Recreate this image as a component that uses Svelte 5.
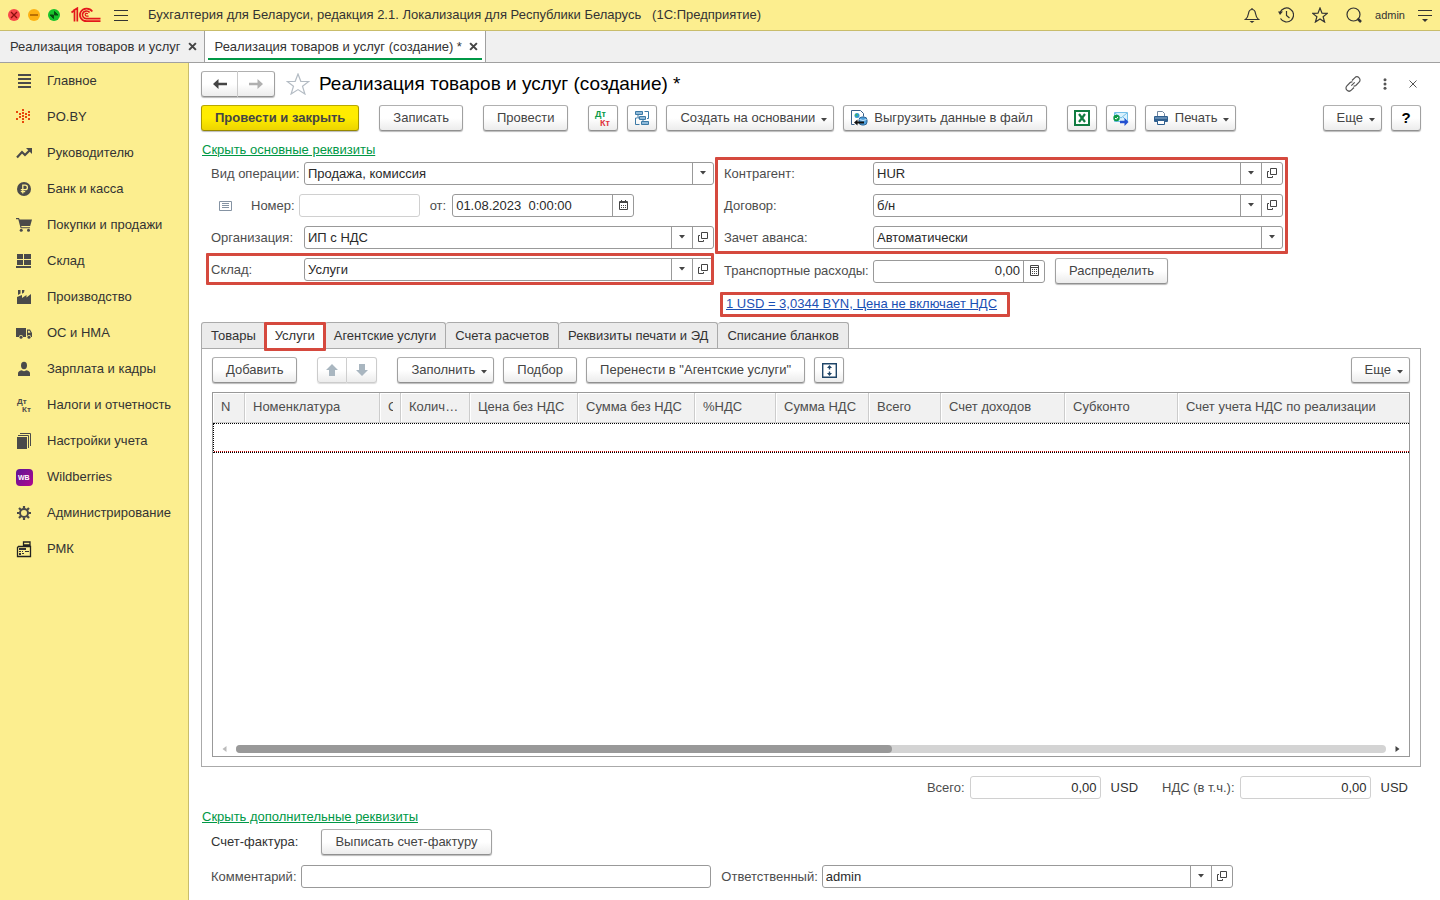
<script>
  const sections = [
    { icon: 'main', title: 'Главное' },
    { icon: 'poby', title: 'PO.BY' },
    { icon: 'chart', title: 'Руководителю' },
    { icon: 'ruble', title: 'Банк и касса' },
    { icon: 'cart', title: 'Покупки и продажи' },
    { icon: 'store', title: 'Склад' },
    { icon: 'factory', title: 'Производство' },
    { icon: 'truck', title: 'ОС и НМА' },
    { icon: 'person', title: 'Зарплата и кадры' },
    { icon: 'dtkt', title: 'Налоги и отчетность' },
    { icon: 'books', title: 'Настройки учета' },
    { icon: 'wb', title: 'Wildberries' },
    { icon: 'gear', title: 'Администрирование' },
    { icon: 'cash', title: 'РМК' }
  ]

  const pages = ['Товары', 'Услуги', 'Агентские услуги', 'Счета расчетов', 'Реквизиты печати и ЭД', 'Списание бланков']

  const columns = [
    { title: 'N', width: 32 },
    { title: 'Номенклатура', width: 135 },
    { title: 'С', width: 21, clip: true },
    { title: 'Колич…', width: 69 },
    { title: 'Цена без НДС', width: 108 },
    { title: 'Сумма без НДС', width: 117 },
    { title: '%НДС', width: 81 },
    { title: 'Сумма НДС', width: 93 },
    { title: 'Всего', width: 72 },
    { title: 'Счет доходов', width: 124 },
    { title: 'Субконто', width: 113 },
    { title: 'Счет учета НДС по реализации' }
  ]

  const poDots = [
    [6, 0], [6, 3], [6, 6], [6, 9], [6, 12],
    [3, 4], [3, 7], [9, 4], [9, 7],
    [0, 2], [0, 9], [12, 2], [12, 5], [12, 9]
  ]

  let activePage = $state('Услуги')
  let operation = $state('Продажа, комиссия')
  let number = $state('')
  let date = $state('01.08.2023  0:00:00')
  let organization = $state('ИП с НДС')
  let warehouse = $state('Услуги')
  let contractor = $state('HUR')
  let contract = $state('б/н')
  let advance = $state('Автоматически')
  let transport = $state('0,00')
  let comment = $state('')
  let responsible = $state('admin')
</script>

{#snippet caret()}
  <svg class="caret" width="6" height="4" viewBox="0 0 6 4"><path d="M0 0h6L3 3.5z" fill="#444" /></svg>
{/snippet}

{#snippet drop(label)}
  <button class="pick" aria-label={label}>{@render caret()}</button>
{/snippet}

{#snippet open(label)}
  <button class="pick" aria-label={label}>
    <svg width="10" height="10" viewBox="0 0 10 10" fill="none" stroke="#444">
      <path d="M3.5 .5h6v6h-6zM2 3.500h-1.500v6h5v-1.500" />
    </svg>
  </button>
{/snippet}

{#snippet cross(size)}
  <svg width={size} height={size} viewBox="0 0 8 8"><path d="M1 1l6 6M7 1L1 7" stroke="#444" stroke-width="1.800" /></svg>
{/snippet}

{#snippet sectionIcon(name)}
  <svg width="17" height="17" viewBox="0 0 17 17" fill="#4a4a4a">
    {#if name === 'main'}
      <path d="M2 1h13v2H2zM2 5h13v2H2zM2 9h13v2H2zM2 13h13v2H2z" />
    {:else if name === 'poby'}
      {#each poDots as [x, y]}
        <rect {x} {y} width="2" height="2" fill="#e8480c" />
      {/each}
    {:else if name === 'chart'}
      <path d="M1 12.500L6 7l3 3 4.500-4.500" fill="none" stroke="#4a4a4a" stroke-width="2.200" />
      <path d="M10 3h6v6z" />
    {:else if name === 'ruble'}
      <circle cx="8" cy="8" r="7" />
      <path d="M6.800 12.500V4.200h2.400a2.200 2.200 0 0 1 0 4.400H4.800M4.800 10.600h4.400" fill="none" stroke="#fcee8f" stroke-width="1.300" />
    {:else if name === 'cart'}
      <path d="M0 1h3l.6 1.500H16L14.200 9H5.200l.3 1.200H14v1H4.600L2.300 2.300H0z" />
      <circle cx="5.200" cy="13.300" r="1.500" /><circle cx="12.500" cy="13.300" r="1.500" />
    {:else if name === 'store'}
      <path d="M1 1h6v5H1zM8 1h7v5H8zM1 7h6v5H1zM8 7h7v5H8zM0 13h15v2H0z" />
    {:else if name === 'factory'}
      <path d="M1 15V8l5-2v3l4.500-3v2.500L15 5v10z" />
      <path d="M2 1h2.500v3.500L2 6zM6 1h2.500L8 3.500 6 4.800z" />
    {:else if name === 'truck'}
      <path d="M0 3h10v9H7a2 2 0 0 0-4 0H0zM11 4.500h3L16 8v4h-1a2 2 0 0 0-4 0z" />
      <path d="M12 5.800h1.500l1 2H12z" fill="#fcee8f" />
      <circle cx="5" cy="12.300" r="1.500" /><circle cx="13" cy="12.300" r="1.500" />
    {:else if name === 'person'}
      <ellipse cx="8" cy="4.500" rx="3" ry="3.700" />
      <path d="M2 15v-2.500Q2 10 5.500 9.300L8 10.200l2.500-.9Q14 10 14 12.500V15z" />
    {:else if name === 'dtkt'}
      <text x="1" y="7" font-size="8" font-weight="700">Дт</text>
      <text x="6" y="15" font-size="8" font-weight="700">Кт</text>
    {:else if name === 'books'}
      <path d="M1 4h10v12H1z" />
      <path d="M2 2.500h10.500V15M4 .5h10.500V13" fill="none" stroke="#4a4a4a" />
    {:else if name === 'wb'}
      <defs>
        <linearGradient id="wbFill" x1="0" y1="0" x2="1" y2="1">
          <stop offset="0" stop-color="#5b1496" /><stop offset="1" stop-color="#b0088f" />
        </linearGradient>
      </defs>
      <rect width="17" height="17" rx="4" fill="url(#wbFill)" />
      <text x="2" y="11" font-size="7" font-weight="700" fill="#fff">WB</text>
    {:else if name === 'gear'}
      <circle cx="8" cy="8" r="4" fill="none" stroke="#4a4a4a" stroke-width="2" />
      <path d="M8 1v2.500M8 12.500V15M1 8h2.500M12.500 8H15M3 3l2 2M11 11l2 2M13 3l-2 2M5 11l-2 2" stroke="#4a4a4a" stroke-width="2.200" />
    {:else if name === 'cash'}
      <path d="M2.500 5.500h12v10h-13v-9zM7.500 1h6.500v3H7.500zM11 4v2" fill="none" stroke="#222" stroke-width="1.300" />
      <path d="M3 7h7v2H3zM3 10h2v1H3zM6 10h1v1H6zM3 12h2v2H3zM6 12h2v1H6zM9 10h4v1H9z" fill="#333" />
    {/if}
  </svg>
{/snippet}

<div class="app">
  <header class="titlebar">
    <div class="window-buttons">
      <button class="dot red" aria-label="Закрыть окно">
        <svg width="12" height="12" viewBox="0 0 12 12"><path d="M3 3l6 6M9 3L3 9" stroke="#8b0f0f" stroke-width="1.300" /></svg>
      </button>
      <button class="dot amber" aria-label="Свернуть">
        <svg width="12" height="12" viewBox="0 0 12 12"><path d="M2 6h8" stroke="#a35c00" stroke-width="1.500" /></svg>
      </button>
      <button class="dot green" aria-label="Развернуть">
        <svg width="12" height="12" viewBox="0 0 12 12"><path d="M6.500 2.500V6H10zM5.500 9.500V6H2z" fill="#064d10" stroke="#064d10" /></svg>
      </button>
    </div>
    <svg class="logo" width="30" height="16" viewBox="0 0 30 16" fill="none" stroke="#e3171b" stroke-width="1.700">
      <path d="M.5 5.500L3.500 3.300V14.500M2.500 3.500L6.300 1.200V14.500" />
      <path d="M21.300 4.500A6.700 6.300 0 1 0 15.800 14.200H29.500" />
      <path d="M18.600 5.500A4 3.800 0 1 0 15.800 11.600H29.500" />
      <path d="M16.800 7a1.400 1.400 0 1 0-1.200 2.100h2" stroke-width="1.200" />
    </svg>
    <button class="flat" aria-label="Главное меню">
      <svg width="14" height="12" viewBox="0 0 14 12"><path d="M0 1.500h14M0 6.500h14M0 11.500h14" stroke="#333" /></svg>
    </button>
    <span class="app-name">Бухгалтерия для Беларуси, редакция 2.1. Локализация для Республики Беларусь &nbsp; (1С:Предприятие)</span>
    <div class="tools">
      <button class="flat" aria-label="Уведомления">
        <svg width="16" height="16" viewBox="0 0 16 16" fill="none" stroke="#333" stroke-width="1.200">
          <path d="M1.500 12.500h13c-2-1.500-2.500-3-3-6C11.100 3.500 10 2.500 8 2.500S4.900 3.500 4.500 6.500c-.5 3-1 4.500-3 6zM8 1v1.500" /><path d="M5.500 14h5L8 16z" fill="#333" stroke="none" />
        </svg>
      </button>
      <button class="flat" aria-label="История">
        <svg width="16" height="16" viewBox="0 0 16 16" fill="none" stroke="#333" stroke-width="1.200">
          <path d="M2 5.500a7 7 0 1 1 .5 6M8.500 4v4.500l3 2.500" /><path d="M0 4.500h5L2 8z" fill="#333" stroke="none" />
        </svg>
      </button>
      <button class="flat" aria-label="Избранное">
        <svg width="16" height="16" viewBox="0 0 16 16" fill="none" stroke="#333" stroke-width="1.200"><path d="M8 1l2 5.200 5.300.2-4.200 3.300 1.500 5.300L8 12l-4.600 3 1.500-5.300L.7 6.400 6 6.200z" /></svg>
      </button>
      <button class="flat" aria-label="Поиск">
        <svg width="16" height="16" viewBox="0 0 16 16" fill="none" stroke="#333"><circle cx="7.500" cy="7.500" r="6.500" stroke-width="1.200" /><path d="M11.500 11.500l3.500 3.500" stroke-width="2.500" /></svg>
      </button>
      <a class="user" href="#user">admin</a>
      <button class="flat" aria-label="Настройка">
        <svg width="14" height="14" viewBox="0 0 14 14"><path d="M0 2.500h14M0 7.500h14" stroke="#333" /><path d="M4 11h6l-3 3z" fill="#333" /></svg>
      </button>
    </div>
  </header>

  <nav class="windows">
    <div class="window-tab">
      <a href="#list">Реализация товаров и услуг</a>
      <button class="flat" aria-label="Закрыть вкладку">{@render cross(9)}</button>
    </div>
    <div class="window-tab active">
      <a href="#doc">Реализация товаров и услуг (создание) *</a>
      <button class="flat" aria-label="Закрыть вкладку">{@render cross(9)}</button>
    </div>
  </nav>

  <div class="body">
    <aside class="sections">
      {#each sections as section (section.icon)}
        <a href="#{section.icon}">
          {@render sectionIcon(section.icon)}
          <span>{section.title}</span>
        </a>
      {/each}
    </aside>

    <main>
      <div class="heading">
        <div class="pair">
          <button class="btn" aria-label="Назад">
            <svg width="14" height="10" viewBox="0 0 14 10"><path d="M5.500 0v3.700H14v2.600H5.500V10L0 5z" fill="#444" /></svg>
          </button>
          <button class="btn" aria-label="Вперед">
            <svg width="14" height="10" viewBox="0 0 14 10"><path d="M8.500 0v3.800H0v2.400h8.500V10L14 5z" fill="#b0b0b0" /></svg>
          </button>
        </div>
        <button class="flat" aria-label="В избранное">
          <svg width="24" height="22" viewBox="0 0 24 22" fill="none" stroke="#b4bcc4" stroke-width="1.200"><path d="M12 1l2.800 7.300 8 .2-6.300 4.800L18.900 21 12 16.600 5.100 21l2.400-7.700L1.200 8.500l8-.2z" /></svg>
        </button>
        <h1>Реализация товаров и услуг (создание) *</h1>
        <div class="form-tools">
          <button class="flat" aria-label="Получить ссылку">
            <svg width="16" height="16" viewBox="0 0 16 16" fill="none" stroke="#555" stroke-width="1.200">
              <path d="M7 4.500L9.700 1.800a2.800 2.800 0 0 1 4.400 4.400L10.800 9.500a2.800 2.800 0 0 1-2.300.5M9 11.500L6.300 14.200a2.800 2.800 0 0 1-4.400-4.400L5.200 6.500a2.800 2.800 0 0 1 2.300-.5M6.300 9.700l3.400-3.400" />
            </svg>
          </button>
          <button class="flat" aria-label="Дополнительно">
            <svg width="4" height="12" viewBox="0 0 4 12" fill="#555"><circle cx="2" cy="1.800" r="1.500" /><circle cx="2" cy="6" r="1.500" /><circle cx="2" cy="10.200" r="1.500" /></svg>
          </button>
          <button class="flat" aria-label="Закрыть">
            <svg width="8" height="8" viewBox="0 0 8 8"><path d="M.5 .5l7 7M7.500 .5l-7 7" stroke="#555" /></svg>
          </button>
        </div>
      </div>

      <div class="commands">
        <button class="btn primary">Провести и закрыть</button>
        <button class="btn apart">Записать</button>
        <button class="btn apart">Провести</button>
        <button class="btn square apart" aria-label="Показать проводки">
          <svg width="18" height="18" viewBox="0 0 18 18"><text x="1" y="8" font-size="9" font-weight="700" fill="#0a9a48">Дт</text><text x="6" y="17" font-size="9" font-weight="700" fill="#e0323c">Кт</text></svg>
        </button>
        <button class="btn square" aria-label="Структура подчиненности">
          <svg width="16" height="16" viewBox="0 0 16 16" fill="#8fb9d8" stroke="#3c7aa6">
            <path d="M1.500 1.500h7v3h-7zM5.500 6.500h6v3h-6zM7.500 11.500h7v3h-7z" /><path d="M10.500 1.500h4v7h-1.500M5.500 14.500h-4V8h2M4 5v3h1.500M9 10v1.500" fill="none" />
          </svg>
        </button>
        <button class="btn menu">Создать на основании{@render caret()}</button>
        <button class="btn export">
          <svg width="18" height="18" viewBox="0 0 18 18">
            <path d="M1.500 1.500h9l3 3v3M1.500 1.500v14h3" fill="#fff" stroke="#39608a" /><circle cx="7" cy="6.500" r="2.500" fill="#2f9bd0" /><circle cx="6.300" cy="6" r="1" fill="#45b649" />
            <rect x="9" y="8" width="8" height="8" rx="3" fill="#4fa0dc" stroke="#2b6496" /><path d="M9.500 10.500q3.500 2 7 0" fill="none" stroke="#cfe6f7" /><path d="M4 13.500L7.500 10.500v2H14v2H7.500v2z" fill="#111" />
          </svg>
          Выгрузить данные в файл
        </button>
        <button class="btn square apart" aria-label="Excel">
          <svg width="16" height="16" viewBox="0 0 16 16"><rect x="1" y="1" width="14" height="14" fill="#fff" stroke="#107c41" stroke-width="2" /><path d="M5 4l6 8M11 4l-6 8" stroke="#107c41" stroke-width="2.200" /></svg>
        </button>
        <button class="btn square" aria-label="Отправить">
          <svg width="16" height="16" viewBox="0 0 16 16"><path d="M1.500 2.500h13v9h-13z" fill="#d9f1fd" stroke="#74bfe8" /><path d="M2 3l6 5 6-5M2 11l4-4M14 11l-4-4" fill="none" stroke="#74bfe8" /><circle cx="3.500" cy="8" r="3.200" fill="#0d9a45" /><path d="M2 8l1.200 1.200L5 7" fill="none" stroke="#fff" /><path d="M7 10.800h4.500V8l4 4-4 4v-2.800H7z" fill="#2450d0" /></svg>
        </button>
        <button class="btn menu print">
          <svg width="16" height="16" viewBox="0 0 16 16"><path d="M4.500 6V1.500h5l2 2V6" fill="#fff" stroke="#6f86a0" /><rect x="1" y="6" width="14" height="6" rx="1" fill="#2f5f8f" /><path d="M2 8h12" stroke="#93b4d3" /><path d="M4.500 10.500h7v4h-7z" fill="#fff" stroke="#2f5f8f" /></svg>
          Печать{@render caret()}
        </button>
        <button class="btn menu push">Еще{@render caret()}</button>
        <button class="btn square help">?</button>
      </div>

      <a class="toggle" href="#main-fields">Скрыть основные реквизиты</a>

      <div class="fields">
        <div class="column left">
          <div class="row">
            <label for="operation">Вид операции:</label>
            <div class="field">
              <select id="operation" bind:value={operation}>
                <option>Продажа, комиссия</option>
              </select>
              <span class="pick">{@render caret()}</span>
            </div>
          </div>
          <div class="row number-row">
            <svg width="13" height="10" viewBox="0 0 13 10" fill="none" stroke="#8593a3"><path d="M.5 .5h12v9H.5zM3 2.500h7M3 4.500h7M3 6.500h7" /></svg>
            <label for="number">Номер:</label>
            <div class="field pale number"><input id="number" bind:value={number} /></div>
            <label for="date">от:</label>
            <div class="field date">
              <input id="date" bind:value={date} />
              <button class="pick" aria-label="Календарь">
                <svg width="9" height="10" viewBox="0 0 9 10" fill="none" stroke="#444"><path d="M.5 1.500h8v8H.5zM0 2.500h9M2.500 0v3M6.500 0v3" /><path d="M2 5.500h5M2 7.500h5" stroke-dasharray="1 1" /></svg>
              </button>
            </div>
          </div>
          <div class="row">
            <label for="organization">Организация:</label>
            <div class="field">
              <input id="organization" bind:value={organization} />
              {@render drop('Выбрать организацию')}{@render open('Открыть организацию')}
            </div>
          </div>
          <div class="row marked mark-store">
            <label for="warehouse">Склад:</label>
            <div class="field">
              <input id="warehouse" bind:value={warehouse} />
              {@render drop('Выбрать склад')}{@render open('Открыть склад')}
            </div>
          </div>
        </div>

        <div class="column right">
          <div class="column marked mark-contract">
            <div class="row">
              <label for="contractor">Контрагент:</label>
              <div class="field">
                <input id="contractor" bind:value={contractor} />
                {@render drop('Выбрать контрагента')}{@render open('Открыть контрагента')}
              </div>
            </div>
            <div class="row">
              <label for="contract">Договор:</label>
              <div class="field">
                <input id="contract" bind:value={contract} />
                {@render drop('Выбрать договор')}{@render open('Открыть договор')}
              </div>
            </div>
            <div class="row">
              <label for="advance">Зачет аванса:</label>
              <div class="field">
                <select id="advance" bind:value={advance}>
                  <option>Автоматически</option>
                </select>
                <span class="pick">{@render caret()}</span>
              </div>
            </div>
          </div>
          <div class="row">
            <label for="transport">Транспортные расходы:</label>
            <div class="field transport">
              <input id="transport" class="num" bind:value={transport} />
              <button class="pick" aria-label="Калькулятор">
                <svg width="9" height="11" viewBox="0 0 9 11" fill="none" stroke="#444"><path d="M.5 .5h8v10h-8zM1 2.500h7" /><path d="M2 4.500h5M2 6.500h5M2 8.500h5" stroke-dasharray="1 1" /></svg>
              </button>
            </div>
            <button class="btn">Распределить</button>
          </div>
          <a class="rate marked mark-rate" href="#rate">1 USD = 3,0344 BYN, Цена не включает НДС</a>
        </div>
      </div>

      <div class="pages" role="tablist">
        {#each pages as page (page)}
          <button
            role="tab"
            class:active={page === activePage}
            class:marked={page === 'Услуги'}
            class:mark-page={page === 'Услуги'}
            aria-selected={page === activePage}
            onclick={() => (activePage = page)}
          >
            {page}
          </button>
        {/each}
      </div>

      <section class="panel">
        <div class="commands">
          <button class="btn">Добавить</button>
          <div class="pair muted apart">
            <button class="btn" aria-label="Переместить вверх">
              <svg width="12" height="12" viewBox="0 0 12 12"><path d="M6 0l6 6H9v6H3V6H0z" fill="#a9b6c0" /></svg>
            </button>
            <button class="btn" aria-label="Переместить вниз">
              <svg width="12" height="12" viewBox="0 0 12 12"><path d="M6 12l6-6H9V0H3v6H0z" fill="#a9b6c0" /></svg>
            </button>
          </div>
          <button class="btn menu apart">Заполнить{@render caret()}</button>
          <button class="btn">Подбор</button>
          <button class="btn">Перенести в "Агентские услуги"</button>
          <button class="btn square" aria-label="Изменить высоту">
            <svg width="15" height="15" viewBox="0 0 15 15"><path d="M.7 .7h13.600v13.600H.7z" fill="#fff" stroke="#1f4568" stroke-width="1.400" /><path d="M7.500 4v2.500M7.500 8.500V11" stroke="#1f4568" stroke-width="1.400" /><path d="M7.500 2l2.500 3H5zM7.500 13l2.500-3H5z" fill="#1f4568" /></svg>
          </button>
          <button class="btn menu push">Еще{@render caret()}</button>
        </div>

        <div class="grid">
          <table>
            <colgroup>
              {#each columns as column (column.title)}
                <col style:width={column.width ? `${column.width}px` : null} />
              {/each}
            </colgroup>
            <thead>
              <tr>
                {#each columns as column (column.title)}
                  <th class:clip={column.clip}>{column.title}</th>
                {/each}
              </tr>
            </thead>
            <tbody>
              <tr><td colspan={columns.length}><div class="cursor"></div></td></tr>
            </tbody>
          </table>
          <div class="scroll">
            <svg width="5" height="6" viewBox="0 0 5 6"><path d="M4.500 0v6L.5 3z" fill="#bbb" /></svg>
            <div class="track"><div class="thumb"></div></div>
            <svg width="5" height="6" viewBox="0 0 5 6"><path d="M.5 0v6l4-3z" fill="#444" /></svg>
          </div>
        </div>
      </section>

      <div class="totals">
        <label for="total">Всего:</label>
        <div class="field pale"><input id="total" class="num" value="0,00" readonly /></div>
        <span>USD</span>
        <label class="vat" for="vat">НДС (в т.ч.):</label>
        <div class="field pale"><input id="vat" class="num" value="0,00" readonly /></div>
        <span>USD</span>
      </div>

      <a class="toggle" href="#extra-fields">Скрыть дополнительные реквизиты</a>

      <div class="invoice">
        <span>Счет-фактура:</span>
        <button class="btn">Выписать счет-фактуру</button>
      </div>

      <div class="footer">
        <label for="comment">Комментарий:</label>
        <div class="field"><input id="comment" bind:value={comment} /></div>
        <label class="second" for="responsible">Ответственный:</label>
        <div class="field">
          <input id="responsible" bind:value={responsible} />
          {@render drop('Выбрать ответственного')}{@render open('Открыть ответственного')}
        </div>
      </div>
    </main>
  </div>
</div>

<style>
  :global(body) {
    font-family: "Liberation Sans", Arial, sans-serif;
    font-size: 13px;
    line-height: 16px;
    color: #333;
    background: #fff;
  }

  .app {
    min-height: 100vh;
    display: flex;
    flex-direction: column;
  }

  .app * {
    box-sizing: border-box;
  }

  svg {
    display: block;
    flex: none;
  }

  button,
  input,
  select {
    font: inherit;
    color: inherit;
  }

  a {
    color: inherit;
    text-decoration: none;
  }

  .flat {
    display: flex;
    padding: 0;
    border: none;
    background: none;
  }

  .titlebar {
    display: flex;
    align-items: center;
    height: 31px;
    padding: 0 8px;
    background: #fcee8f;
    border-bottom: 1px solid #c9bd6b;
  }

  .window-buttons {
    display: flex;
    gap: 8px;
  }

  .dot {
    width: 12px;
    height: 12px;
    padding: 0;
    border: none;
    border-radius: 50%;
  }

  .dot.red {
    background: #f8484a;
  }

  .dot.amber {
    background: #fdb113;
  }

  .dot.green {
    background: #16c22c;
  }

  .logo {
    margin: 0 13px 0 11px;
  }

  .app-name {
    margin-left: 20px;
    white-space: nowrap;
  }

  .tools {
    display: flex;
    align-items: center;
    gap: 18px;
    margin-left: auto;
  }

  .user {
    margin: 0 -5px;
    font-size: 11px;
  }

  .windows {
    display: flex;
    height: 32px;
    background: #f0f0f0;
    border-bottom: 1px solid #a0a0a0;
  }

  .window-tab {
    display: flex;
    align-items: center;
    gap: 7px;
    padding: 0 7px 0 10px;
    border-right: 1px solid #a0a0a0;
  }

  .window-tab.active {
    position: relative;
    background: #fff;
  }

  .window-tab.active::after {
    content: '';
    position: absolute;
    left: 3px;
    right: 3px;
    bottom: 2px;
    height: 2px;
    background: #009846;
  }

  .body {
    flex: 1;
    display: flex;
  }

  .sections {
    flex: none;
    width: 189px;
    background: #fcee8f;
    border-right: 1px solid #c9bd6b;
  }

  .sections a {
    display: flex;
    align-items: center;
    gap: 14px;
    height: 36px;
    padding-left: 16px;
  }

  main {
    flex: 1;
    min-width: 0;
    display: flex;
    flex-direction: column;
    padding: 8px 19px 12px 12px;
  }

  .heading {
    display: flex;
    align-items: center;
    height: 26px;
    margin-bottom: 8px;
  }

  h1 {
    margin: 0 0 0 9px;
    font-size: 19px;
    line-height: 24px;
    font-weight: 400;
    color: #000;
  }

  .form-tools {
    display: flex;
    align-items: center;
    gap: 22px;
    margin-left: auto;
    padding-right: 4px;
  }

  .btn {
    display: flex;
    align-items: center;
    justify-content: center;
    height: 26px;
    padding: 0 13px;
    border: 1px solid #a0a0a0;
    border-color: #b0b0b0 #a0a0a0 #909090;
    border-radius: 3px;
    background: linear-gradient(#fff 50%, #ececec);
    box-shadow: 0 1px 1px #bbb;
    color: #444;
    white-space: nowrap;
  }

  .btn.primary {
    font-weight: 700;
    background: linear-gradient(#ffec00 50%, #ecd400);
    border-color: #b8a800 #a89800 #968800;
  }

  .btn.square {
    width: 30px;
    padding: 0;
  }

  .btn.help {
    color: #000;
    font-size: 15px;
    font-weight: 700;
  }

  .btn.menu {
    gap: 6px;
    padding-right: 6px;
  }

  .btn.menu .caret {
    margin-top: 4px;
  }

  .btn.export {
    gap: 6px;
    padding-left: 6px;
  }

  .btn.print {
    padding-left: 7px;
  }

  .pair {
    display: flex;
    margin-right: 11px;
  }

  .pair .btn {
    width: 37px;
    padding: 0;
  }

  .pair .btn:first-child {
    border-right-color: #ccc;
    border-radius: 3px 0 0 3px;
  }

  .pair .btn:last-child {
    border-left: none;
    border-radius: 0 3px 3px 0;
  }

  .pair.muted {
    margin-right: 0;
  }

  .pair.muted .btn {
    width: 30px;
    border-color: #ccc;
    box-shadow: 0 1px 1px #ddd;
  }

  .commands {
    display: flex;
    gap: 9px;
  }

  .apart {
    margin-left: 11px;
  }

  .push {
    margin-left: auto;
  }

  .toggle {
    align-self: flex-start;
    margin: 11px 0 4px 1px;
    color: #009846;
    text-decoration: underline;
  }

  .fields {
    display: grid;
    grid-template-columns: 503fr 559fr 128fr;
    gap: 10px;
    padding-left: 10px;
  }

  .column {
    display: flex;
    flex-direction: column;
    gap: 9px;
  }

  .row {
    display: flex;
    align-items: center;
  }

  label {
    flex: none;
    color: #4d4d4d;
    white-space: nowrap;
  }

  .left .row > label {
    width: 93px;
  }

  .right .row > label {
    width: 149px;
  }

  .field {
    flex: 1;
    display: flex;
    min-width: 0;
    height: 23px;
    border: 1px solid #999;
    border-radius: 3px;
    background: #fff;
  }

  .field.pale {
    border-color: #d0d0d0;
  }

  .field input,
  .field select {
    flex: 1;
    min-width: 0;
    padding: 0 3px;
    border: none;
    outline: none;
    background: none;
    appearance: none;
    color: #2a2a2a;
    white-space: pre;
  }

  .field input.num {
    text-align: right;
  }

  .pick {
    flex: none;
    display: flex;
    align-items: center;
    justify-content: center;
    width: 21px;
    padding: 0 0 2px;
    border: none;
    border-left: 1px solid #999;
    background: none;
  }

  .left .number-row {
    padding-left: 8px;
  }

  .left .number-row > label {
    width: auto;
    margin: 0 4px 0 19px;
  }

  .left .number-row .number + label {
    margin: 0 6px 0 10px;
  }

  .field.number {
    flex: 0 1 121px;
  }

  .field.date {
    flex: 0 1 182px;
  }

  .field.transport {
    flex: 0 1 172px;
    margin-right: 10px;
  }

  .rate {
    align-self: flex-start;
    margin: 3px 0 0 2px;
    color: #1a4fb4;
    text-decoration: underline;
  }

  .marked {
    position: relative;
  }

  .marked::after {
    content: '';
    position: absolute;
    border: 3px solid #d5493e;
    border-radius: 1px;
    pointer-events: none;
  }

  .mark-store::after {
    inset: -5px 0 -4px -5px;
  }

  .mark-contract::after {
    inset: -5px -5px -5px -9px;
  }

  .mark-rate::after {
    inset: -4px -13px -5px -6px;
  }

  .mark-page::after {
    inset: -1px -2px -3px -2px;
  }

  .pages {
    display: flex;
    margin-top: 10px;
  }

  .pages button {
    height: 26px;
    padding: 0 9px;
    border: 1px solid #aaa;
    border-width: 1px 1px 0 0;
    border-radius: 3px 3px 0 0;
    background: #ebebeb;
    white-space: nowrap;
  }

  .pages button:first-child {
    border-left-width: 1px;
  }

  .pages button.active {
    z-index: 1;
    background: #fff;
  }

  .panel {
    flex: 1;
    display: flex;
    flex-direction: column;
    gap: 9px;
    padding: 8px 10px 9px;
    border: 1px solid #aaa;
  }

  .grid {
    flex: 1;
    display: flex;
    flex-direction: column;
    min-height: 200px;
    border: 1px solid #999;
  }

  table {
    width: 100%;
    table-layout: fixed;
    border-spacing: 0;
  }

  th {
    height: 30px;
    padding: 0 8px 2px;
    overflow: hidden;
    text-align: left;
    text-overflow: ellipsis;
    white-space: nowrap;
    font-weight: 400;
    color: #4d4d4d;
    background: #f1f1f1;
    border-right: 1px solid #ccc;
    border-bottom: 1px solid #ccc;
    box-shadow: inset 1px 1px #fff;
  }

  th:last-child {
    border-right: none;
  }

  th.clip {
    text-overflow: clip;
    overflow: clip;
    overflow-clip-margin: content-box;
    padding-right: 7px;
  }

  td {
    padding: 0;
    border: 1px dotted #000;
    border-right: none;
  }

  .cursor {
    height: 28px;
    border-bottom: 1px dotted #b00;
  }

  .scroll {
    display: flex;
    align-items: center;
    justify-content: space-between;
    gap: 9px;
    margin-top: auto;
    padding: 0 9px 3px;
  }

  .track {
    flex: 1;
    height: 8px;
    border-radius: 4px;
    background: #d4d4d4;
  }

  .thumb {
    width: 57%;
    height: 8px;
    border-radius: 4px;
    background: #999;
  }

  .totals {
    display: flex;
    align-items: center;
    justify-content: flex-end;
    margin-top: 9px;
    padding-right: 13px;
  }

  .totals .field {
    flex: 0 1 131px;
    margin: 0 10px 0 5px;
  }

  .vat {
    margin-left: 24px;
  }

  .invoice {
    display: flex;
    align-items: center;
    gap: 23px;
    padding-left: 10px;
  }

  .footer {
    display: grid;
    grid-template-columns: auto 410fr auto 410fr 188fr;
    align-items: center;
    margin-top: 10px;
    padding-left: 10px;
  }

  .footer label {
    padding-right: 4px;
  }

  .footer .second {
    padding-left: 10px;
  }

  .totals + .toggle {
    margin-top: 10px;
  }
</style>
